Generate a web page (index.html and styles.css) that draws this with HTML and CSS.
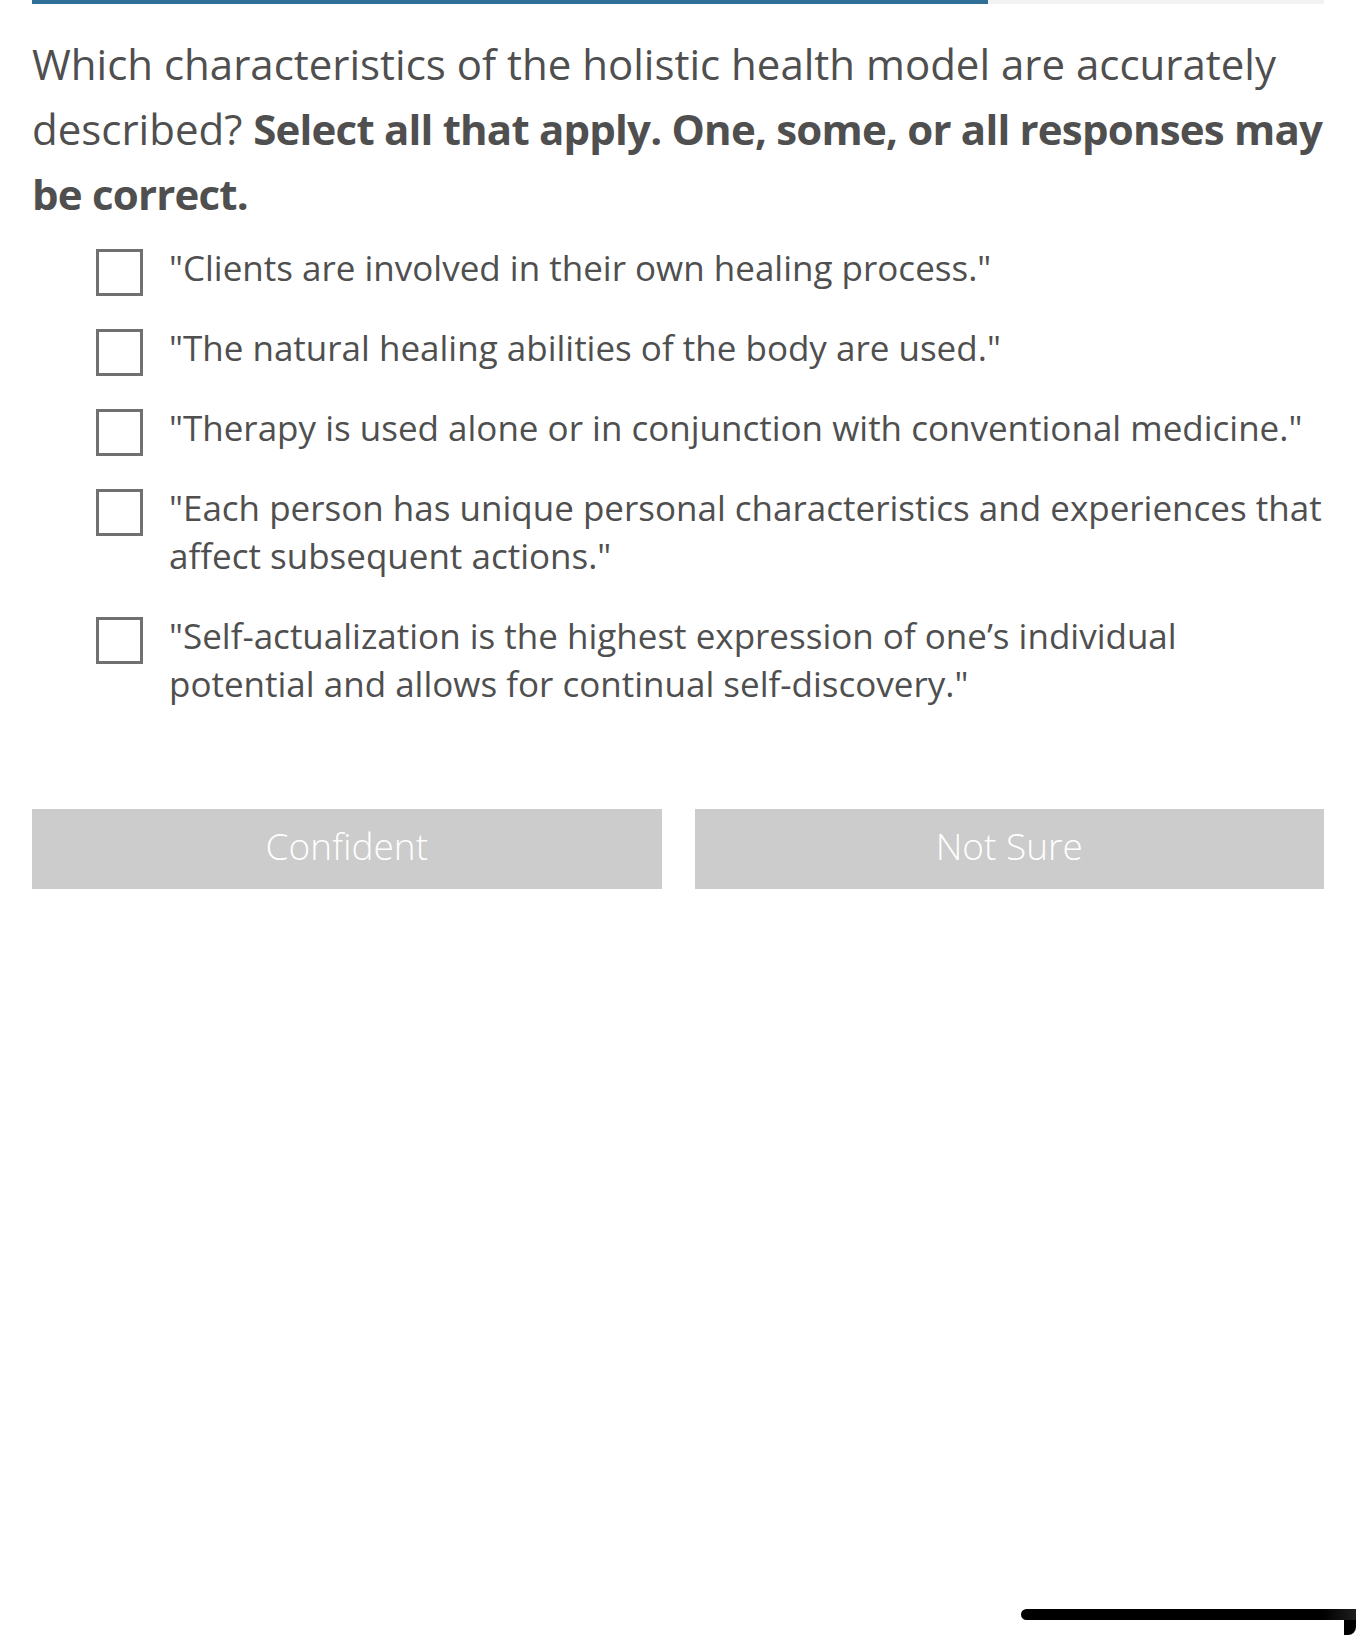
FILE: index.html
```html
<!DOCTYPE html>
<html lang="en">
<head>
<meta charset="utf-8">
<title>Question</title>
<link rel="stylesheet" href="styles.css">
</head>
<body>
<div class="screen">
  <main class="page">
    <div class="progress"><div class="progress-fill" style="width:74%"></div></div>
    <p class="question">Which characteristics of the holistic health model are accurately described? <strong class="instr">Select all that apply. One, some, or all responses may be correct.</strong></p>
    <ul class="options">
      <li class="option"><span class="box"></span><span class="label">"Clients are involved in their own healing process."</span></li>
      <li class="option"><span class="box"></span><span class="label">"The natural healing abilities of the body are used."</span></li>
      <li class="option"><span class="box"></span><span class="label">"Therapy is used alone or in conjunction with conventional medicine."</span></li>
      <li class="option"><span class="box"></span><span class="label">"Each person has unique personal characteristics and experiences that affect subsequent actions."</span></li>
      <li class="option"><span class="box"></span><span class="label">"Self-actualization is the highest expression of one’s individual potential and allows for continual self-discovery."</span></li>
    </ul>
    <div class="actions">
      <button class="btn" type="button">Confident</button>
      <button class="btn" type="button">Not Sure</button>
    </div>
  </main>
  <div class="home-indicator"></div>
  <div class="corner"></div>
</div>
</body>
</html>
```
FILE: styles.css
```css
html, body {
  margin: 0;
  padding: 0;
  background: #ffffff;
}

.screen {
  position: relative;
  min-height: 1635px;
  overflow: hidden;
}

.page {
  padding: 0 32px;
  font-family: "Open Sans", "Noto Sans", sans-serif;
  color: #4f4f4f;
}

.progress {
  height: 4px;
  background: #f2f2f2;
}

.progress-fill {
  height: 100%;
  background: #2f6f97;
}

.question {
  margin: 27px 0 0;
  font-size: 42px;
  line-height: 65px;
  font-weight: 400;
}

.instr {
  font-weight: 700;
  letter-spacing: -0.8px;
}

.options {
  list-style: none;
  margin: 18px 0 0;
  padding: 0 0 0 64px;
  display: flex;
  flex-direction: column;
  gap: 32px;
}

.option {
  display: flex;
  align-items: flex-start;
  gap: 26px;
}

.box {
  flex: none;
  width: 41px;
  height: 41px;
  border: 3px solid #707070;
  background: #ffffff;
  transform: translateY(5px);
}

.label {
  font-size: 35px;
  line-height: 48px;
}

.actions {
  margin-top: 101px;
  display: grid;
  grid-template-columns: 1fr 1fr;
  gap: 33px;
}

.btn {
  height: 80px;
  border: 0;
  border-radius: 0;
  background: #cccccc;
  color: #ffffff;
  font-family: "Open Sans", "Noto Sans", sans-serif;
  font-weight: 300;
  font-size: 37px;
  padding: 0 0 8px;
}

.home-indicator {
  position: absolute;
  left: 1021px;
  right: 0;
  top: 1609px;
  height: 11px;
  border-radius: 6px 0 0 6px;
  background: linear-gradient(to right, #000000 90%, #1e1e1e 100%);
}

.corner {
  position: absolute;
  right: 0;
  top: 1620px;
  width: 12px;
  height: 15px;
  background: #000000;
  border-bottom-right-radius: 8px;
}
```
